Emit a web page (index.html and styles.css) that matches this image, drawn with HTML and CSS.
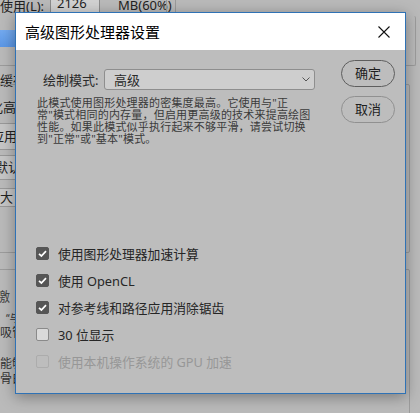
FILE: index.html
```html
<!DOCTYPE html>
<html>

<head>
    <meta charset="utf-8">
    <meta name="viewport" content="width=device-width, initial-scale=1">
    <link rel="stylesheet" href="styles.css">
</head>

<body>
    <!-- preferences window behind the modal -->
    <div class="prefs">
        <div class="prefs-top">
            <span class="prefs-label">使用(L):</span>
            <span class="prefs-input">2126</span>
            <span class="prefs-unit">MB(60%)</span>
            <span class="prefs-sep"></span>
            <span class="prefs-sep"></span>
            <span class="prefs-cut">理想范围: 1965-2022</span>
        </div>
        <div class="prefs-main">
            <div class="prefs-left">
                <div class="list-sel"></div>
                <div class="cut-text t-cache">高速缓存级别</div>
                <div class="cut-text t-opt">优化高速缓存</div>
                <div class="cut-box b-apply">应用</div>
                <div class="cut-box b-default">默认</div>
                <div class="cut-box b-big">大</div>
                <div class="cut-text t-active">如激</div>
                <div class="cut-small t-quote">&ldquo;与</div>
                <div class="cut-small t-suck">吸管</div>
                <div class="cut-small t-can">能够</div>
                <div class="cut-small t-bone">骨白</div>
            </div>
            <div class="prefs-right">
                <div class="group g1"></div>
                <div class="group g2"></div>
                <div class="group g3"></div>
            </div>
        </div>
    </div>

    <div class="modal">
        <div class="modal-title">
            <h1>高级图形处理器设置</h1>
            <svg class="close" width="12" height="12" viewBox="0 0 12 12">
                <path d="M0.5 0.5 L11.5 11.5 M11.5 0.5 L0.5 11.5" stroke="#111" stroke-width="1.1" fill="none" />
            </svg>
        </div>
        <div class="modal-body">
            <div class="main">
                <div class="form-row">
                    <span class="form-label">绘制模式:</span>
                    <div class="dropdown">
                        <span>高级</span>
                        <svg width="8" height="5" viewBox="0 0 8 5">
                            <path d="M0.5 0.5 L4 4 L7.5 0.5" stroke="#555" stroke-width="1" fill="none" />
                        </svg>
                    </div>
                </div>
                <p class="desc">此模式使用图形处理器的密集度最高。它使用与"正<br>常"模式相同的内存量，但启用更高级的技术来提高绘图<br>性能。如果此模式似乎执行起来不够平滑，请尝试切换<br>到"正常"或"基本"模式。</p>

                <div class="checks">
                    <label class="check-row">
                        <span class="box checked"><svg width="13" height="13" viewBox="0 0 13 13"><path d="M3 6.8 L5.4 9 L10 4.2" stroke="#fff" stroke-width="1.7" fill="none" /></svg></span>
                        <span>使用图形处理器加速计算</span>
                    </label>
                    <label class="check-row">
                        <span class="box checked"><svg width="13" height="13" viewBox="0 0 13 13"><path d="M3 6.8 L5.4 9 L10 4.2" stroke="#fff" stroke-width="1.7" fill="none" /></svg></span>
                        <span>使用 OpenCL</span>
                    </label>
                    <label class="check-row">
                        <span class="box checked"><svg width="13" height="13" viewBox="0 0 13 13"><path d="M3 6.8 L5.4 9 L10 4.2" stroke="#fff" stroke-width="1.7" fill="none" /></svg></span>
                        <span>对参考线和路径应用消除锯齿</span>
                    </label>
                    <label class="check-row">
                        <span class="box"></span>
                        <span>30 位显示</span>
                    </label>
                    <label class="check-row disabled">
                        <span class="box"></span>
                        <span>使用本机操作系统的 GPU 加速</span>
                    </label>
                </div>
            </div>
            <div class="buttons">
                <div class="btn default">确定</div>
                <div class="btn">取消</div>
            </div>
        </div>
    </div>
</body>

</html>
```

FILE: styles.css
```css
* {
    box-sizing: border-box;
}

body {
    margin: 0;
    width: 420px;
    height: 413px;
    overflow: hidden;
    position: relative;
    background-color: #bababa;
    font-family: "Noto Sans", "Noto Sans CJK SC", sans-serif;
    color: #222;
}

/* ---------- background window ---------- */

.prefs {
    margin-top: -6px;
    height: 419px;
    overflow: hidden;
}

.prefs-top {
    display: flex;
    align-items: center;
    height: 22px;
    font-size: 13px;
    white-space: nowrap;
}

.prefs-label {
    width: 50px;
}

.prefs-input {
    width: 50px;
    height: 20px;
    margin-top: -4px;
    padding-left: 6px;
    line-height: 18px;
    background-color: #d2d2d2;
    border: 1px solid #8c8c8c;
}

.prefs-unit {
    margin-left: 18px;
    width: 40px;
}

.prefs-sep {
    width: 9px;
    height: 22px;
    border-right: 1px solid #9a9a9a;
}

.prefs-sep:first-of-type {
    margin-left: 49px;
}

.prefs-cut {
    margin-left: 12px;
    margin-top: -24px;
    font-size: 12px;
}

.prefs-main {
    display: grid;
}

.prefs-left,
.prefs-right {
    grid-area: 1 / 1;
}

.prefs-left {
    font-size: 13px;
    white-space: nowrap;
}

.list-sel {
    margin: 14px 0 0 -14px;
    width: 60px;
    height: 17px;
    background: linear-gradient(#73aaf0, #5b97e6);
}

.cut-text {
    height: 16px;
    line-height: 16px;
}

.t-cache {
    margin: 25px 0 0 -26px;
}

.t-opt {
    margin: 11px 0 0 -23px;
}

.cut-box {
    width: 70px;
    margin-left: -30px;
    background-color: #c6c6c6;
    border: 1px solid #999;
    border-radius: 2px;
}

.b-apply {
    margin-top: 8px;
    height: 27px;
    line-height: 25px;
    padding-left: 20px;
}

.b-default {
    margin-top: 5px;
    height: 25px;
    line-height: 23px;
    padding-left: 24px;
}

.b-big {
    margin-top: 8px;
    height: 19px;
    line-height: 17px;
    padding-left: 29px;
}

.t-active {
    margin: 81px 0 0 -16px;
    color: #444;
}

.cut-small {
    font-size: 12px;
    height: 13px;
    line-height: 13px;
    color: #333;
}

.t-quote {
    margin: 9px 0 0 6px;
    height: 11px;
    line-height: 11px;
    font-size: 10px;
}

.t-suck {
    margin-top: 2px;
}

.t-can {
    margin-top: 18px;
}

.t-bone {
    margin-top: 2px;
}

.prefs-right {
    display: flex;
    flex-direction: column;
}

.group {
    border: 1px solid #9c9c9c;
    border-radius: 2px;
    margin-left: -20px;
}

.g1 {
    width: 436px;
    height: 50px;
    border-top: none;
}

.g2 {
    width: 430px;
    margin-top: 18px;
    height: 169px;
}

.g3 {
    width: 430px;
    margin-top: 16px;
    height: 160px;
}

/* ---------- modal ---------- */

.modal {
    position: absolute;
    left: 15px;
    top: 12px;
    width: 391px;
    height: 382px;
    border: 1px solid #2f72b5;
    background-color: #bdbdbd;
    box-shadow: 0 3px 14px rgba(0, 0, 0, 0.35);
    display: flex;
    flex-direction: column;
}

.modal-title {
    height: 37px;
    flex: none;
    background-color: #fff;
    display: flex;
    align-items: center;
    justify-content: space-between;
    padding: 0 15px 0 9px;
}

.modal-title h1 {
    margin: 0;
    font-size: 15px;
    font-weight: normal;
    color: #000;
}

.modal-body {
    flex: 1;
    display: flex;
}

.main {
    width: 310px;
    padding-top: 19px;
}

.form-row {
    display: flex;
    align-items: center;
    padding-left: 27px;
    font-size: 13px;
    color: #2a2a2a;
}

.form-label {
    width: 61px;
}

.dropdown {
    width: 211px;
    height: 21px;
    display: flex;
    align-items: center;
    justify-content: space-between;
    padding: 0 4px 0 9px;
    background-color: #cecece;
    border: 1px solid #8e8e8e;
    border-radius: 3px;
}

.desc {
    margin: 7px 0 0 0;
    padding-left: 21px;
    font-size: 11px;
    line-height: 12px;
    letter-spacing: 0.2px;
    white-space: nowrap;
    color: #3a3a3a;
}

.checks {
    margin-top: 95px;
    display: flex;
    flex-direction: column;
}

.check-row {
    height: 27px;
    display: flex;
    align-items: center;
    padding-left: 20px;
    font-size: 12.8px;
    color: #262626;
    white-space: nowrap;
}

.box {
    width: 13px;
    height: 13px;
    margin-right: 9px;
    border: 1px solid #8a8a8a;
    border-radius: 2px;
    background-color: #dadada;
    flex: none;
    display: flex;
}

.box svg {
    margin: -1px;
}

.box.checked {
    background-color: #565656;
    border-color: #565656;
}

.check-row.disabled {
    color: #979797;
}

.check-row.disabled .box {
    background-color: transparent;
    border-color: #acacac;
}

.buttons {
    margin: 10px 10px 0 auto;
    display: flex;
    flex-direction: column;
    gap: 9px;
}

.btn {
    width: 54px;
    height: 27px;
    line-height: 25px;
    text-align: center;
    font-size: 13px;
    color: #1e1e1e;
    border: 1px solid #909090;
    border-radius: 14px;
}

.btn.default {
    border-color: #5e5e5e;
}
```
